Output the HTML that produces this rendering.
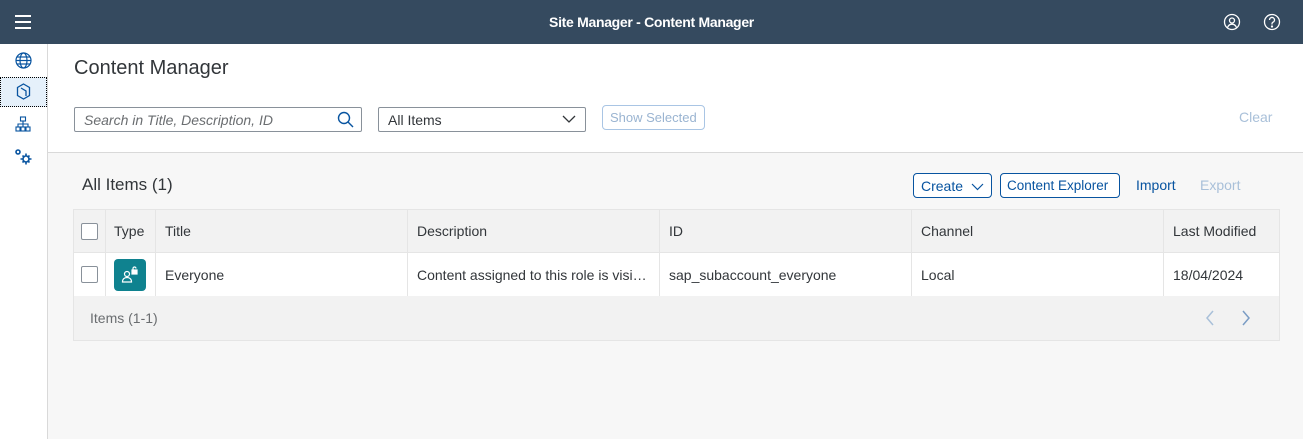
<!DOCTYPE html>
<html><head><meta charset="utf-8"><style>
*{box-sizing:border-box;margin:0;padding:0}
body{width:1303px;height:439px;overflow:hidden;font-family:"Liberation Sans",sans-serif;background:#f7f7f7;position:relative;color:#32363a;font-size:14px;white-space:nowrap}
.hdr{position:absolute;left:0;top:0;width:1303px;height:44px;background:#354a5f;color:#fff}
.hdr .t{position:absolute;left:0;right:0;top:14px;text-align:center;font-size:14px;font-weight:bold;letter-spacing:-0.3px}
.side{position:absolute;left:0;top:44px;width:48px;height:395px;background:#fff;border-right:1px solid #d9d9d9}
.top{position:absolute;left:48px;top:44px;width:1255px;height:109px;background:#fff;border-bottom:1px solid #d9d9d9}
.abs{position:absolute}
.inp{position:absolute;height:25px;border:1px solid #89919a;border-radius:2px;background:#fff;font-size:14px;padding:4px 9px}
.btn{position:absolute;height:25px;border:1px solid #0854a0;border-radius:4px;color:#0854a0;font-size:14px;padding:4px 7px;background:#fff}
table{position:absolute;left:73px;top:209px;width:1207px;border-collapse:collapse;font-size:14px;table-layout:fixed}
td{border:1px solid #e5e5e5;padding:0 9px;height:44px;background:#fff;overflow:hidden;text-overflow:ellipsis}
tr.h td{background:#f2f2f2;height:43px}
.cb{width:17px;height:17px;border:1px solid #89919a;border-radius:2px;background:#fff}
</style></head><body>
<div class="hdr">
<svg class="abs" style="left:14px;top:14px" width="18" height="16"><g stroke="#fff" stroke-width="2"><line x1="1" y1="2" x2="17" y2="2"/><line x1="1" y1="8" x2="17" y2="8"/><line x1="1" y1="14" x2="17" y2="14"/></g></svg>
<div class="t">Site Manager - Content Manager</div>
<svg class="abs" style="left:1223px;top:13px" width="18" height="18" fill="none" stroke="#fff" stroke-width="1.3"><circle cx="9" cy="9" r="7.5"/><circle cx="9" cy="7.5" r="2.5"/><path d="M4.5 14.5c1-2.5 3-3.3 4.5-3.3s3.5.8 4.5 3.3"/></svg>
<svg class="abs" style="left:1263px;top:13px" width="18" height="18" fill="none" stroke="#fff" stroke-width="1.3"><circle cx="9" cy="9" r="7.5"/><path d="M6.5 7a2.5 2.5 0 1 1 3.3 2.3c-.6.3-.8.8-.8 1.5v.7"/><circle cx="9" cy="13.5" r=".5" fill="#fff"/></svg>
</div>
<div class="side">
<svg class="abs" style="left:15px;top:8px" width="17" height="17" fill="none" stroke="#0854a0" stroke-width="1.2"><circle cx="8.5" cy="8.5" r="7.5"/><ellipse cx="8.5" cy="8.5" rx="3.5" ry="7.5"/><line x1="1" y1="8.5" x2="16" y2="8.5"/><line x1="2" y1="5" x2="15" y2="5"/><line x1="2" y1="12" x2="15" y2="12"/></svg>
<div class="abs" style="left:0;top:33px;width:47px;height:30px;background:#e5f0fa;border:1px dotted #000"></div>
<svg class="abs" style="left:16px;top:39px" width="15" height="17" fill="none" stroke="#0854a0" stroke-width="1.3"><path d="M7.5 1l6 3.5v8l-6 3.5-6-3.5v-8z"/><path d="M5 5l5 3v5"/></svg>
<svg class="abs" style="left:15px;top:72px" width="16" height="16" fill="none" stroke="#0854a0" stroke-width="1.1"><rect x="5.5" y="1" width="5" height="4"/><rect x="1" y="11" width="4" height="4"/><rect x="6" y="11" width="4" height="4"/><rect x="11" y="11" width="4" height="4"/><path d="M8 5v3M3 11V8h10v3M8 8v3"/></svg>
<svg class="abs" style="left:14px;top:104px" width="19" height="18" fill="none" stroke="#0854a0" stroke-width="1.6"><circle cx="4" cy="4" r="2"/><circle cx="12" cy="11" r="3"/><path d="M12 5.5v2M12 14.5v2M6.5 11h2M15.5 11h2M8.5 7.5l1.3 1.3M14.2 13.2l1.3 1.3M15.5 7.5l-1.3 1.3M9.8 13.2l-1.3 1.3"/></svg>
</div>
<div class="top">
<div class="abs" style="left:26px;top:13px;font-size:20px;color:#32363a">Content Manager</div>
<div class="inp" style="left:26px;top:63px;width:288px;font-style:italic;color:#6a6d70">Search in Title, Description, ID</div>
<svg class="abs" style="left:289px;top:67px" width="17" height="17" fill="none" stroke="#0854a0" stroke-width="1.4"><circle cx="7" cy="7" r="5.5"/><line x1="11" y1="11" x2="16" y2="16"/></svg>
<div class="inp" style="left:330px;top:63px;width:208px;color:#32363a">All Items</div>
<svg class="abs" style="left:514px;top:71px" width="14" height="9" fill="none" stroke="#32363a" stroke-width="1.3"><path d="M1 1l6 6 6-6"/></svg>
<div class="btn" style="left:554px;top:61px;border-color:#a9c5e4;color:#9ab4d1;font-size:13px;padding:4px 7px">Show Selected</div>
<div class="abs" style="left:1191px;top:65px;color:#a9c0d9">Clear</div>
</div>
<div class="abs" style="left:82px;top:175px;font-size:17px;color:#32363a">All Items (1)</div>
<div class="btn" style="left:913px;top:173px;width:79px;padding:4px 7px">Create <svg width="13" height="8" style="margin-left:4px;vertical-align:middle" fill="none" stroke="#0854a0" stroke-width="1.2"><path d="M1 1l5.5 5.5L12 1"/></svg></div>
<div class="btn" style="left:1000px;top:173px;width:120px;padding:4px 6px;font-size:13.5px">Content Explorer</div>
<div class="abs" style="left:1136px;top:177px;color:#0854a0">Import</div>
<div class="abs" style="left:1200px;top:177px;color:#a9c0d9">Export</div>
<table>
<colgroup><col style="width:32px"><col style="width:50px"><col style="width:252px"><col style="width:252px"><col style="width:252px"><col style="width:252px"><col></colgroup>
<tr class="h"><td style="padding:0 7px"><div class="cb"></div></td><td style="padding:0 8px">Type</td><td>Title</td><td>Description</td><td>ID</td><td>Channel</td><td>Last Modified</td></tr>
<tr><td style="padding:0 7px"><div class="cb"></div></td><td style="padding:0 8px"><div style="width:32px;height:32px;background:#0f828f;border-radius:4px;position:relative"><svg style="position:absolute;left:7px;top:7px" width="18" height="18" fill="none" stroke="#fff" stroke-width="1.2"><circle cx="6" cy="8" r="2.5"/><path d="M1.5 16c0-3 2-4.5 4.5-4.5s4.5 1.5 4.5 4.5z"/><rect x="11" y="4" width="5" height="4" fill="#fff"/><path d="M12 4V2.5a1.5 1.5 0 0 1 3 0"/></svg></div></td><td>Everyone</td><td>Content assigned to this role is visible</td><td>sap_subaccount_everyone</td><td>Local</td><td>18/04/2024</td></tr>
</table>
<div class="abs" style="left:73px;top:296px;width:1207px;height:45px;background:#f2f2f2;border:1px solid #e5e5e5;border-top:none"><div class="abs" style="left:16px;top:14px;color:#6a6d70">Items (1-1)</div>
<svg class="abs" style="left:1131px;top:14px" width="10" height="16" fill="none" stroke="#a9c0d9" stroke-width="1.5"><path d="M8 1L2 8l6 7"/></svg>
<svg class="abs" style="left:1167px;top:14px" width="10" height="16" fill="none" stroke="#7a9cc4" stroke-width="1.5"><path d="M2 1l6 7-6 7"/></svg>
</div>
</body></html>
